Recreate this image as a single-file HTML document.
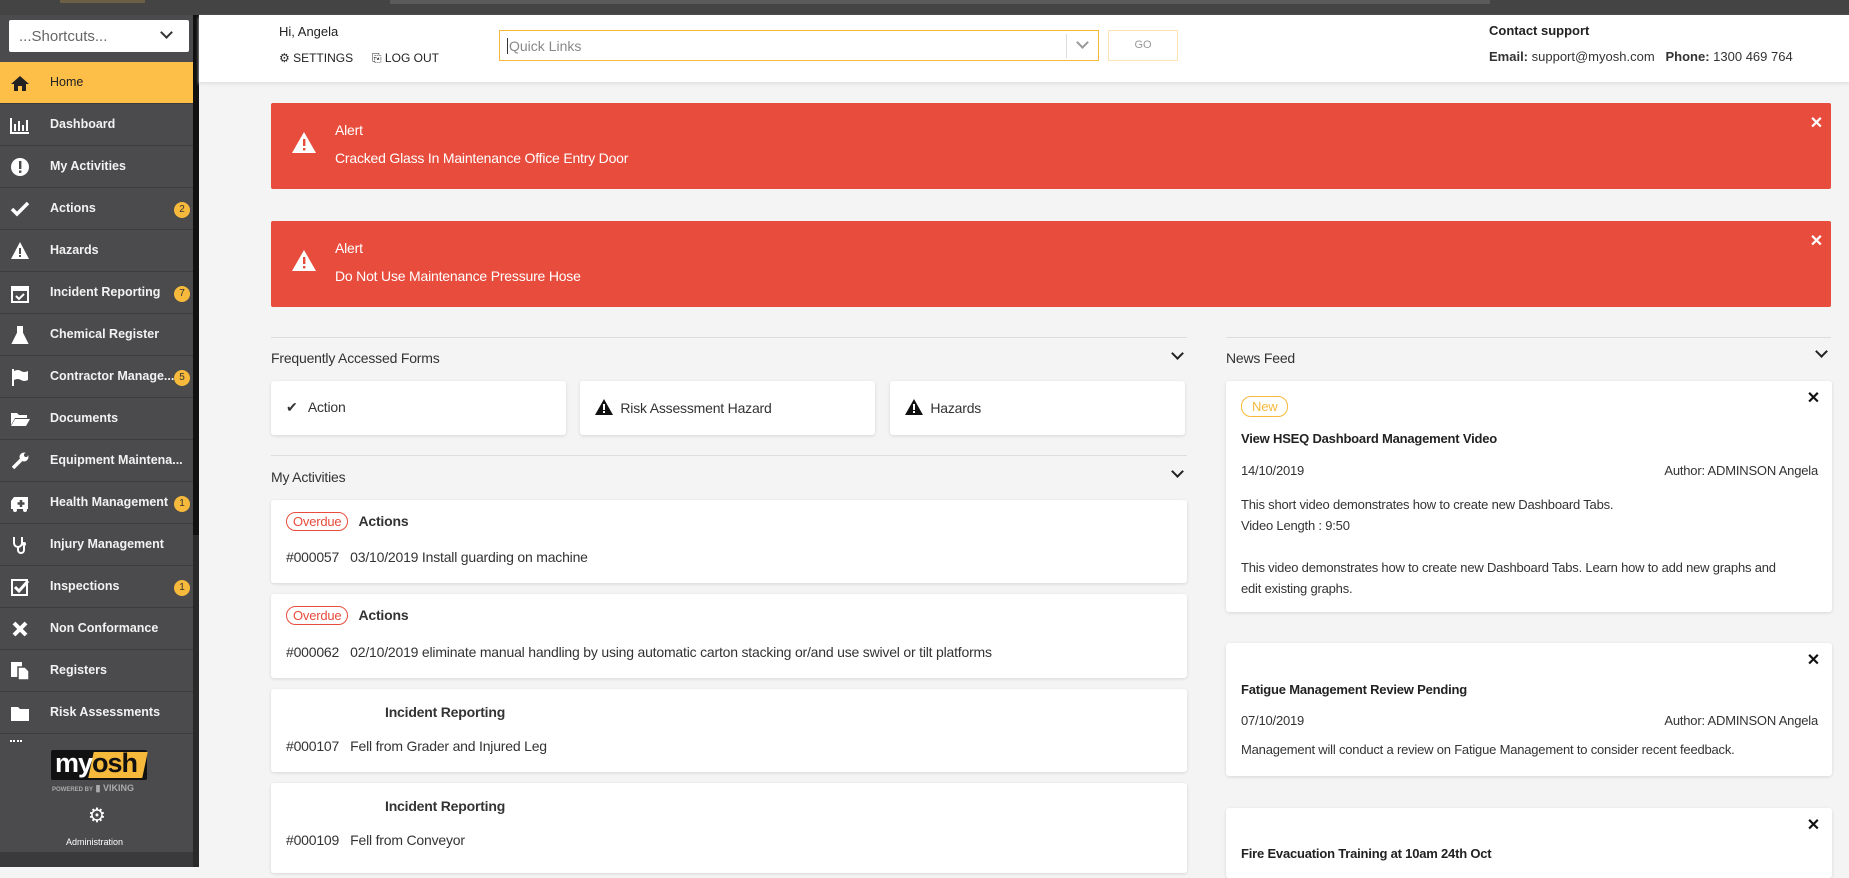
<!DOCTYPE html>
<html><head><meta charset="utf-8"><style>
*{box-sizing:border-box;margin:0;padding:0}
body{width:1849px;height:867px;overflow:hidden;background:#f4f4f4;font-family:"Liberation Sans",Arial,sans-serif;color:#333;position:relative}
.abs{position:absolute}
#top{left:0;top:0;width:1849px;height:15px;background:#444}
#side{left:0;top:15px;width:193px;height:852px;background:#4b4b4d}
#sbar{left:193px;top:15px;width:6px;height:852px;background:#2a2a2a}
#shortcut{left:9px;top:20px;width:180px;height:32px;background:#fff;border-radius:2px;font-size:15px;color:#666;padding:8px 10px}
.item{position:absolute;left:0;width:193px;height:42px;border-bottom:1px solid #3c3c3e;color:#f2f2f2;font-size:12.5px;font-weight:bold;line-height:41px;padding-left:50px;white-space:nowrap}
.item.home{background:#fdbf47;color:#222;font-weight:normal}
.ic{position:absolute;left:10px;top:11px;width:20px;height:20px}
.badge{position:absolute;left:174px;top:14px;width:16px;height:16px;border-radius:50%;background:#f6b93b;color:#333;font-size:10px;line-height:16px;text-align:center;font-weight:normal}
#hdr{left:199px;top:15px;width:1650px;height:67px;background:#fff;box-shadow:0 2px 3px #e0e0e0}
.alert{position:absolute;left:271px;width:1560px;height:86px;background:#e74c3c;color:#fff;border-radius:2px;letter-spacing:-0.2px}
.alert .t1{position:absolute;left:64px;top:19px;font-size:14px}
.alert .t2{position:absolute;left:64px;top:47px;font-size:14px}
.alert .x{position:absolute;right:8px;top:10px;font-size:16px;font-weight:bold}
.alert svg{position:absolute;left:20px;top:28px}
.sec{position:absolute;font-size:14px;color:#333;letter-spacing:-0.2px}
.line{position:absolute;height:1px;background:#ddd}
.card{position:absolute;background:#fff;border-radius:3px;box-shadow:0 1px 3px rgba(0,0,0,.12);letter-spacing:-0.2px}
.chev{position:absolute;width:9px;height:9px;border-right:2px solid #222;border-bottom:2px solid #222;transform:rotate(45deg)}
.od{display:inline-block;border:1px solid #e74c3c;color:#e74c3c;border-radius:10px;padding:1px 6px;font-size:13px;margin-right:10px}
.ct{font-size:14px;color:#333}
</style></head><body>
<div class="abs" id="top"><div class="abs" style="left:60px;top:0;width:85px;height:3px;background:#6b5f45"></div><div class="abs" style="left:390px;top:0;width:1100px;height:4px;background:#5a5a5a"></div></div>
<div class="abs" id="side"></div>
<div class="abs" id="sbar"><div class="abs" style="left:0;top:0;width:6px;height:520px;background:#111"></div></div>
<div class="abs" id="shortcut">...Shortcuts...<span class="chev" style="right:18px;top:8px;border-color:#333"></span></div>

<div class="item home" style="top:62px"><svg class="ic" viewBox="0 0 20 20"><path d="M10 3L1 11h3v7h4v-5h4v5h4v-7h3z" fill="#222"/></svg>Home</div>
<div class="item" style="top:104px"><svg class="ic" viewBox="0 0 20 20"><path d="M1 3v15h18" stroke="#fff" stroke-width="2" fill="none"/><rect x="4" y="9" width="2" height="7" fill="#fff"/><rect x="8" y="6" width="2" height="10" fill="#fff"/><rect x="12" y="10" width="2" height="6" fill="#fff"/><rect x="16" y="5" width="2" height="11" fill="#fff"/></svg>Dashboard</div>
<div class="item" style="top:146px"><svg class="ic" viewBox="0 0 20 20"><circle cx="10" cy="10" r="9" fill="#fff"/><rect x="9" y="4" width="2.4" height="8" fill="#4b4b4d"/><rect x="9" y="13.5" width="2.4" height="2.4" fill="#4b4b4d"/></svg>My Activities</div>
<div class="item" style="top:188px"><svg class="ic" viewBox="0 0 20 20"><path d="M2 10l5 5L18 4" stroke="#fff" stroke-width="3.5" fill="none"/></svg>Actions<span class="badge">2</span></div>
<div class="item" style="top:230px"><svg class="ic" viewBox="0 0 20 20"><path d="M10 1L19 18H1z" fill="#fff"/><rect x="9" y="7" width="2" height="6" fill="#4b4b4d"/><rect x="9" y="14" width="2" height="2" fill="#4b4b4d"/></svg>Hazards</div>
<div class="item" style="top:272px"><svg class="ic" viewBox="0 0 20 20"><rect x="2" y="4" width="16" height="15" stroke="#fff" stroke-width="2" fill="none"/><rect x="2" y="4" width="16" height="4" fill="#fff"/><path d="M6 13l3 3 5-5" stroke="#fff" stroke-width="2" fill="none"/></svg>Incident Reporting<span class="badge">7</span></div>
<div class="item" style="top:314px"><svg class="ic" viewBox="0 0 20 20"><path d="M7 2h6M8 2v6L3 18h14L12 8V2" stroke="#fff" stroke-width="2" fill="#fff"/></svg>Chemical Register</div>
<div class="item" style="top:356px"><svg class="ic" viewBox="0 0 20 20"><rect x="2" y="2" width="2" height="17" fill="#fff"/><path d="M4 4q4-2 7 0t7 0v9q-4 2-7 0t-7 0z" fill="#fff"/></svg>Contractor Manage...<span class="badge">5</span></div>
<div class="item" style="top:398px"><svg class="ic" viewBox="0 0 20 20"><path d="M1 4h6l2 2h8v3H5L1 16z M5 10h15l-4 7H1z" fill="#fff"/></svg>Documents</div>
<div class="item" style="top:440px"><svg class="ic" viewBox="0 0 20 20"><path d="M3 17l8-8" stroke="#fff" stroke-width="3.5"/><circle cx="14" cy="6" r="4.5" fill="#fff"/><circle cx="16" cy="4" r="2" fill="#4b4b4d"/></svg>Equipment Maintena...</div>
<div class="item" style="top:482px"><svg class="ic" viewBox="0 0 20 20"><path d="M1 8l3-4h14v12H1z" fill="#fff"/><path d="M11 7v7M7.5 10.5h7" stroke="#4b4b4d" stroke-width="2.5"/><circle cx="5" cy="17" r="2" fill="#fff"/><circle cx="15" cy="17" r="2" fill="#fff"/></svg>Health Management<span class="badge">1</span></div>
<div class="item" style="top:524px"><svg class="ic" viewBox="0 0 20 20"><path d="M4 2v6a4 4 0 0 0 8 0V2M8 12v3a3 3 0 0 0 6 0v-4" stroke="#fff" stroke-width="2" fill="none"/><circle cx="14" cy="9" r="2" fill="#fff"/></svg>Injury Management</div>
<div class="item" style="top:566px"><svg class="ic" viewBox="0 0 20 20"><rect x="2" y="3" width="15" height="15" stroke="#fff" stroke-width="2" fill="none"/><path d="M5 10l4 4 9-10" stroke="#fff" stroke-width="3" fill="none"/></svg>Inspections<span class="badge">1</span></div>
<div class="item" style="top:608px"><svg class="ic" viewBox="0 0 20 20"><path d="M4 4l12 12M16 4L4 16" stroke="#fff" stroke-width="4"/></svg>Non Conformance</div>
<div class="item" style="top:650px"><svg class="ic" viewBox="0 0 20 20"><rect x="1" y="1" width="11" height="15" fill="#fff"/><path d="M8 6h7l4 4v9H8z" fill="#fff" stroke="#4b4b4d" stroke-width="1.5"/></svg>Registers</div>
<div class="item" style="top:692px"><svg class="ic" viewBox="0 0 20 20"><path d="M1 4h7l2 2h9v12H1z" fill="#fff"/></svg>Risk Assessments</div>
<div class="abs" style="left:10px;top:740px;width:12px;height:4px;border-top:2px dotted #fff"></div>
<div class="abs" style="left:51px;top:750px;width:96px;height:30px;background:#111;border-radius:2px"></div>
<div class="abs" style="left:91px;top:752px;width:54px;height:26px;background:#f6b93b;transform:skewX(-12deg)"></div>
<div class="abs" style="left:55px;top:748px;font-size:27px;font-weight:bold;color:#fff;letter-spacing:-1px">my<span style="color:#111">osh</span></div>
<div class="abs" style="left:52px;top:783px;font-size:9px;font-weight:bold;color:#aaa"><span style="font-size:6px">POWERED BY</span> ▮ VIKING</div>
<div class="abs" style="left:88px;top:803px;font-size:20px;color:#fff">⚙</div>
<div class="abs" style="left:66px;top:837px;font-size:9px;color:#fff">Administration</div>
<div class="abs" style="left:0;top:852px;width:193px;height:15px;background:#3a3a3c"></div>

<div class="abs" id="hdr"></div>
<div class="abs" style="left:279px;top:24px;font-size:13px;color:#222">Hi, Angela</div>
<div class="abs" style="left:279px;top:51px;font-size:12px;color:#222">⚙ SETTINGS</div>
<div class="abs" style="left:372px;top:51px;font-size:12px;color:#222">⎘ LOG OUT</div>
<div class="abs" style="left:499px;top:30px;width:600px;height:31px;background:#fff;border:1px solid #f6b93b;font-size:14px;color:#888;padding:7px 7px"><span style="border-left:1px solid #333;padding-left:1px">Quick Links</span>
<div class="abs" style="right:0;top:3px;width:32px;height:24px;border-left:1px solid #ddd"><span class="chev" style="left:11px;top:4px;border-color:#999"></span></div></div>
<div class="abs" style="left:1108px;top:30px;width:70px;height:31px;background:#fff;border:1px solid #fae5b0;font-size:11px;color:#999;text-align:center;line-height:29px">GO</div>
<div class="abs" style="left:1489px;top:23px;font-size:13px;font-weight:bold;color:#222">Contact support</div>
<div class="abs" style="left:1489px;top:49px;font-size:13px;color:#333"><b>Email:</b> support@myosh.com &nbsp;&nbsp;<b>Phone:</b> 1300 469 764</div>

<div class="alert" style="top:103px"><svg width="26" height="24" viewBox="0 0 26 24"><path d="M13 1L25 22H1z" fill="#fff"/><rect x="12" y="8" width="2.4" height="7" fill="#e74c3c"/><rect x="12" y="17" width="2.4" height="2.4" fill="#e74c3c"/></svg><div class="t1">Alert</div><div class="t2">Cracked Glass In Maintenance Office Entry Door</div><div class="x">✕</div></div>
<div class="alert" style="top:221px"><svg width="26" height="24" viewBox="0 0 26 24"><path d="M13 1L25 22H1z" fill="#fff"/><rect x="12" y="8" width="2.4" height="7" fill="#e74c3c"/><rect x="12" y="17" width="2.4" height="2.4" fill="#e74c3c"/></svg><div class="t1">Alert</div><div class="t2">Do Not Use Maintenance Pressure Hose</div><div class="x">✕</div></div>

<div class="line" style="left:271px;top:337px;width:916px"></div>
<div class="sec" style="left:271px;top:350px">Frequently Accessed Forms</div><span class="chev" style="left:1173px;top:349px"></span>
<div class="card" style="left:271px;top:381px;width:295px;height:54px"><div class="ct abs" style="left:15px;top:18px">✔&nbsp;&nbsp; Action</div></div>
<div class="card" style="left:580px;top:381px;width:295px;height:54px"><div class="ct abs" style="left:15px;top:18px"><svg width="18" height="16" viewBox="0 0 18 16" style="vertical-align:-2px"><path d="M9 0L18 16H0z" fill="#111"/><rect x="8" y="5" width="2" height="6" fill="#fff"/><rect x="8" y="12" width="2" height="2" fill="#fff"/></svg>&nbsp; Risk Assessment Hazard</div></div>
<div class="card" style="left:890px;top:381px;width:295px;height:54px"><div class="ct abs" style="left:15px;top:18px"><svg width="18" height="16" viewBox="0 0 18 16" style="vertical-align:-2px"><path d="M9 0L18 16H0z" fill="#111"/><rect x="8" y="5" width="2" height="6" fill="#fff"/><rect x="8" y="12" width="2" height="2" fill="#fff"/></svg>&nbsp; Hazards</div></div>

<div class="line" style="left:271px;top:455px;width:916px"></div>
<div class="sec" style="left:271px;top:469px">My Activities</div><span class="chev" style="left:1173px;top:467px"></span>
<div class="card" style="left:271px;top:500px;width:916px;height:83px"><div class="abs" style="left:15px;top:12px"><span class="od">Overdue</span><b style="font-size:14px">Actions</b></div><div class="ct abs" style="left:15px;top:49px">#000057 &nbsp;&nbsp;03/10/2019 Install guarding on machine</div></div>
<div class="card" style="left:271px;top:594px;width:916px;height:84px"><div class="abs" style="left:15px;top:12px"><span class="od">Overdue</span><b style="font-size:14px">Actions</b></div><div class="ct abs" style="left:15px;top:50px">#000062 &nbsp;&nbsp;02/10/2019 eliminate manual handling by using automatic carton stacking or/and use swivel or tilt platforms</div></div>
<div class="card" style="left:271px;top:689px;width:916px;height:83px"><b class="abs" style="left:114px;top:15px;font-size:14px">Incident Reporting</b><div class="ct abs" style="left:15px;top:49px">#000107 &nbsp;&nbsp;Fell from Grader and Injured Leg</div></div>
<div class="card" style="left:271px;top:783px;width:916px;height:90px"><b class="abs" style="left:114px;top:15px;font-size:14px">Incident Reporting</b><div class="ct abs" style="left:15px;top:49px">#000109 &nbsp;&nbsp;Fell from Conveyor</div></div>

<div class="line" style="left:1226px;top:337px;width:605px"></div>
<div class="sec" style="left:1226px;top:350px">News Feed</div><span class="chev" style="left:1817px;top:347px"></span>
<div class="card" style="left:1226px;top:381px;width:606px;height:231px">
<div class="abs" style="left:15px;top:15px;border:1px solid #f6b93b;color:#f6b93b;border-radius:10px;padding:2px 10px;font-size:13px">New</div>
<div class="abs" style="right:12px;top:7px;font-size:16px;font-weight:bold;color:#111">✕</div>
<b class="abs" style="left:15px;top:50px;font-size:13px;color:#222">View HSEQ Dashboard Management Video</b>
<div class="ct abs" style="left:15px;top:82px;font-size:13px">14/10/2019</div><div class="ct abs" style="right:14px;top:82px;font-size:13px">Author: ADMINSON Angela</div>
<div class="ct abs" style="left:15px;top:113px;font-size:13px;line-height:21px;width:545px">This short video demonstrates how to create new Dashboard Tabs.<br>Video Length : 9:50<br><br>This video demonstrates how to create new Dashboard Tabs. Learn how to add new graphs and edit existing graphs.</div>
</div>
<div class="card" style="left:1226px;top:643px;width:606px;height:133px">
<div class="abs" style="right:12px;top:7px;font-size:16px;font-weight:bold;color:#111">✕</div>
<b class="abs" style="left:15px;top:39px;font-size:13px;color:#222">Fatigue Management Review Pending</b>
<div class="ct abs" style="left:15px;top:70px;font-size:13px">07/10/2019</div><div class="ct abs" style="right:14px;top:70px;font-size:13px">Author: ADMINSON Angela</div>
<div class="ct abs" style="left:15px;top:99px;font-size:13px">Management will conduct a review on Fatigue Management to consider recent feedback.</div>
</div>
<div class="card" style="left:1226px;top:808px;width:606px;height:70px">
<div class="abs" style="right:12px;top:7px;font-size:16px;font-weight:bold;color:#111">✕</div>
<b class="abs" style="left:15px;top:38px;font-size:13px;color:#222">Fire Evacuation Training at 10am 24th Oct</b>
</div>
</body></html>
